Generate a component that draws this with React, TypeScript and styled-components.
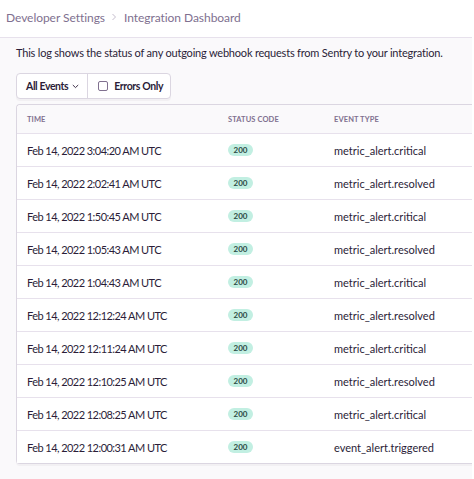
import React from "react";
import styled, { createGlobalStyle } from "styled-components";

const Global = createGlobalStyle`
  html, body { margin: 0; padding: 0; background: #fff; }
  body { font-family: Lato, "Open Sans", sans-serif; color: #2b1d38; }
  * { box-sizing: border-box; }
`;

const Page = styled.div`
  width: 474px;
  height: 479px;
  overflow: hidden;
  display: flex;
  flex-direction: column;
  border-right: 2px solid #fff;
`;

const Header = styled.div`
  height: 38px;
  flex: none;
  display: flex;
  align-items: center;
  padding: 0 6px 3px;
  gap: 5.5px;
  border-bottom: 1px solid #e7e1ec;
  font-size: 12px;
  letter-spacing: -0.05px;
  color: #80708f;
  background: #fff;
`;

const Crumb = styled.span`
  white-space: nowrap;
`;

const Sep = styled.svg`
  width: 8px;
  height: 8px;
  flex: none;
`;

const Body = styled.div`
  flex: 1;
  background: #faf9fb;
  padding: 7px 0 0 16px;
  display: flex;
  flex-direction: column;
`;

const Desc = styled.p`
  margin: 0;
  font-size: 11px;
  letter-spacing: -0.2px;
  line-height: 16px;
  color: #2b1d38;
  white-space: nowrap;
`;

const ButtonBar = styled.div`
  display: flex;
  margin-top: 12px;
  width: max-content;
  border: 1px solid #dbd6e1;
  border-radius: 4px;
  background: #fff;
  box-shadow: 0 2px 0 rgba(43, 29, 56, 0.04);
`;

const FilterButton = styled.div<{ $divider?: boolean }>`
  height: 24px;
  display: flex;
  align-items: center;
  gap: 4px;
  padding: ${(p) => (p.$divider ? "0 7px 0 10px" : "0 8px 0 9px")};
  font-size: 10.5px;
  letter-spacing: -0.4px;
  font-weight: 700;
  color: #2b1d38;
  border-left: ${(p) => (p.$divider ? "1px solid #dbd6e1" : "none")};
  white-space: nowrap;
`;

const Check = styled.span`
  width: 10px;
  height: 10px;
  border: 1px solid #80708f;
  border-radius: 2px;
  margin-right: 2px;
`;

const Panel = styled.div`
  margin-top: 5px;
  background: #fff;
  border: 1px solid #dbd6e1;
  border-right: none;
  border-radius: 4px 0 0 4px;
  box-shadow: 0 2px 0 rgba(43, 29, 56, 0.04);
`;

const Row = styled.div<{ $head?: boolean }>`
  display: grid;
  grid-template-columns: 201px 106px 1fr;
  align-items: center;
  height: ${(p) => (p.$head ? "28px" : "33px")};
  padding-left: 10px;
  background: ${(p) => (p.$head ? "#faf9fb" : "#fff")};
  border-top: ${(p) => (p.$head ? "none" : "1px solid #e7e1ec")};
  border-radius: ${(p) => (p.$head ? "4px 0 0 0" : "0")};
  font-size: ${(p) => (p.$head ? "7.5px" : "11px")};
  font-weight: ${(p) => (p.$head ? 700 : 400)};
  color: ${(p) => (p.$head ? "#80708f" : "#2b1d38")};
  text-transform: ${(p) => (p.$head ? "uppercase" : "none")};
  letter-spacing: ${(p) => (p.$head ? "0.1px" : "0")};
  white-space: nowrap;
`;

const TimeCell = styled.span`
  letter-spacing: -0.55px;
`;

const Badge = styled.span`
  justify-self: start;
  display: inline-flex;
  align-items: center;
  justify-content: center;
  height: 12px;
  width: 25px;
  border-radius: 7px;
  background: #c2efe2;
  color: #2b4a44;
  font-size: 8px;
  font-weight: 700;
`;

const rows = [
  ["Feb 14, 2022 3:04:20 AM UTC", "metric_alert.critical"],
  ["Feb 14, 2022 2:02:41 AM UTC", "metric_alert.resolved"],
  ["Feb 14, 2022 1:50:45 AM UTC", "metric_alert.critical"],
  ["Feb 14, 2022 1:05:43 AM UTC", "metric_alert.resolved"],
  ["Feb 14, 2022 1:04:43 AM UTC", "metric_alert.critical"],
  ["Feb 14, 2022 12:12:24 AM UTC", "metric_alert.resolved"],
  ["Feb 14, 2022 12:11:24 AM UTC", "metric_alert.critical"],
  ["Feb 14, 2022 12:10:25 AM UTC", "metric_alert.resolved"],
  ["Feb 14, 2022 12:08:25 AM UTC", "metric_alert.critical"],
  ["Feb 14, 2022 12:00:31 AM UTC", "event_alert.triggered"],
];

export default function App() {
  return (
    <>
      <Global />
      <Page>
        <Header>
          <Crumb>Developer Settings</Crumb>
          <Sep viewBox="0 0 8 8">
            <path d="M2.5 1 L5.5 4 L2.5 7" fill="none" stroke="#c6bece" strokeWidth="1" />
          </Sep>
          <Crumb>Integration Dashboard</Crumb>
        </Header>
        <Body>
          <Desc>This log shows the status of any outgoing webhook requests from Sentry to your integration.</Desc>
          <ButtonBar>
            <FilterButton>
              All Events
              <svg width="7" height="5" viewBox="0 0 7 5">
                <path d="M0.8 1 L3.5 3.6 L6.2 1" fill="none" stroke="#2b1d38" strokeWidth="0.9" />
              </svg>
            </FilterButton>
            <FilterButton $divider>
              <Check />
              Errors Only
            </FilterButton>
          </ButtonBar>
          <Panel>
            <Row $head>
              <span>Time</span>
              <span>Status Code</span>
              <span>Event Type</span>
            </Row>
            {rows.map(([t, e]) => (
              <Row key={t}>
                <TimeCell>{t}</TimeCell>
                <Badge>200</Badge>
                <span>{e}</span>
              </Row>
            ))}
          </Panel>
        </Body>
      </Page>
    </>
  );
}
